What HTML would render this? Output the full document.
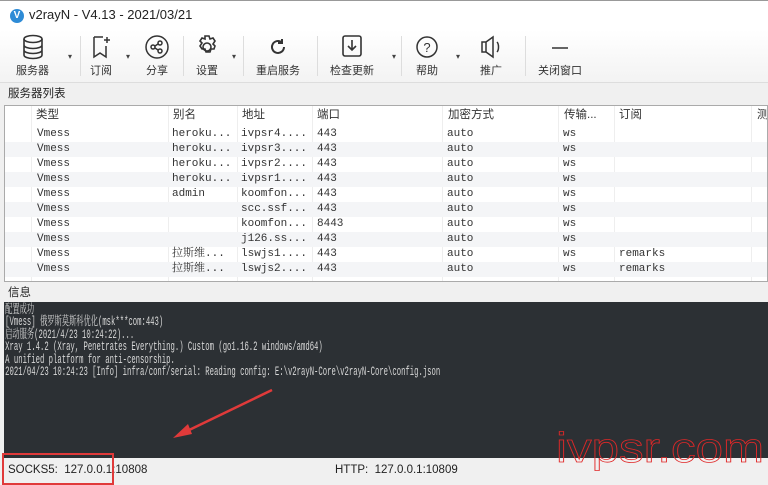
<!DOCTYPE html>
<html><head><meta charset="utf-8"><style>
*{margin:0;padding:0;box-sizing:border-box}
body{width:768px;height:485px;overflow:hidden;background:#f0f0f0;font-family:"Liberation Sans","Noto Sans CJK SC",sans-serif;position:relative;font-size:11px;color:#222}
.abs{position:absolute}
.title{left:0;top:0;width:768px;height:30px;background:#fff;border-top:1px solid #999}
.tb{top:30px;left:0;width:768px;height:52px;background:linear-gradient(#fff,#f3f3f3)}
.btn{position:absolute;top:4px;text-align:center;font-size:11px;color:#333}
.btn svg{display:block;margin:0 auto 2px}
.sep{position:absolute;top:6px;width:1px;height:40px;background:#ddd}
.dd{position:absolute;top:22px;font-size:8px;color:#444}
.tbl{left:4px;top:105px;width:764px;height:177px;background:#fff;border:1px solid #aaa;overflow:hidden}
.row{position:absolute;left:0;width:764px;height:15px;font-family:"Liberation Mono","Noto Serif CJK SC",monospace;font-size:11px;line-height:13px;color:#333}
.row span{position:absolute;top:1px;white-space:nowrap;line-height:13px}
.hd span{font-family:"Liberation Sans","Noto Sans CJK SC",sans-serif;font-size:11.5px;color:#333}
.alt{background:#f4f5f7}
.vl{position:absolute;top:0;width:1px;height:177px;background:#eee}
.con{left:4px;top:302px;width:764px;height:156px;background:#2c3034;overflow:hidden}
.con div{font-family:"Liberation Mono","Noto Serif CJK SC",monospace;font-size:12.5px;line-height:12.4px;color:#d8d8d8;padding:2px 0 0 2px;white-space:pre;transform:scaleX(0.58);transform-origin:0 0;width:1300px}
.status{left:0;top:458px;width:768px;height:27px;background:#f0f0f0;font-size:11.5px}
</style></head><body>
<div class="abs title">
 <div class="abs" style="left:10px;top:8px;width:14px;height:14px;border-radius:50%;background:#2e8bd6;color:#fff;font-size:10px;font-weight:bold;text-align:center;line-height:14px">V</div>
 <div class="abs" style="left:29px;top:6px;font-size:13px;color:#222">v2rayN - V4.13 - 2021/03/21</div>
</div>
<div class="abs tb">
 <div class="btn" style="left:16px"><svg width="24" height="26" viewBox="0 0 24 26" fill="none" stroke="#333" stroke-width="1.6"><ellipse cx="12" cy="5" rx="9" ry="3.5"/><path d="M3 5v16c0 2 4 3.5 9 3.5s9-1.5 9-3.5V5M3 11c0 2 4 3.5 9 3.5s9-1.5 9-3.5M3 16c0 2 4 3.5 9 3.5s9-1.5 9-3.5"/></svg>服务器</div>
 <div class="dd" style="left:68px">▾</div><div class="sep" style="left:80px"></div>
 <div class="btn" style="left:90px"><svg width="22" height="26" viewBox="0 0 22 26" fill="none" stroke="#333" stroke-width="1.5"><path d="M4 3h9M4 3v20l6-4 6 4V12M14 6h6M17 3v6"/></svg>订阅</div>
 <div class="dd" style="left:126px">▾</div>
 <div class="btn" style="left:145px"><svg width="24" height="26" viewBox="0 0 24 26" fill="none" stroke="#333" stroke-width="1.5"><circle cx="12" cy="13" r="11"/><circle cx="8" cy="13" r="2"/><circle cx="15" cy="9" r="2"/><circle cx="15" cy="17" r="2"/><path d="M10 12l3-2M10 14l3 2"/></svg>分享</div>
 <div class="sep" style="left:183px"></div>
 <div class="btn" style="left:195px"><svg width="24" height="26" viewBox="0 0 24 26" fill="none" stroke="#333" stroke-width="1.6"><circle cx="12" cy="13" r="4"/><path d="M10 2h4l1 3 3-1 2 3-2 3 2 2-1 3-3 0-1 3h-4l-1-3-3 0-2-3 2-3-2-2 2-3 3 1z"/></svg>设置</div>
 <div class="dd" style="left:232px">▾</div><div class="sep" style="left:243px"></div>
 <div class="btn" style="left:256px"><svg width="22" height="26" viewBox="0 0 22 26" fill="none" stroke="#333" stroke-width="2"><path d="M17 13a6 6 0 1 1-2-4.5M15 5v4h-4"/></svg>重启服务</div>
 <div class="sep" style="left:317px"></div>
 <div class="btn" style="left:330px"><svg width="24" height="26" viewBox="0 0 24 26" fill="none" stroke="#333" stroke-width="1.6"><rect x="3" y="2" width="18" height="20" rx="2"/><path d="M12 6v10M8 12l4 4 4-4"/></svg>检查更新</div>
 <div class="dd" style="left:392px">▾</div><div class="sep" style="left:401px"></div>
 <div class="btn" style="left:415px"><svg width="24" height="26" viewBox="0 0 24 26" fill="none" stroke="#333" stroke-width="1.5"><circle cx="12" cy="13" r="10"/><text x="12" y="18" font-size="13" text-anchor="middle" fill="#333" stroke="none" font-family="Liberation Sans">?</text></svg>帮助</div>
 <div class="dd" style="left:456px">▾</div>
 <div class="btn" style="left:479px"><svg width="24" height="26" viewBox="0 0 24 26" fill="none" stroke="#333" stroke-width="1.5"><path d="M3 8h4v10H3zM7 8l7-5v20l-7-5M18 8c2 2 2 8 0 10"/></svg>推广</div>
 <div class="sep" style="left:525px"></div>
 <div class="btn" style="left:538px"><svg width="24" height="26" viewBox="0 0 24 26"><path d="M4 14h16" stroke="#333" stroke-width="1.5"/></svg>关闭窗口</div>
</div>
<div class="abs" style="left:0;top:82px;width:768px;height:1px;background:#ddd"></div>
<div class="abs" style="left:8px;top:85px;font-size:11.5px">服务器列表</div>
<div class="abs tbl">
 <div class="vl" style="left:26px"></div><div class="vl" style="left:163px"></div><div class="vl" style="left:232px"></div><div class="vl" style="left:307px"></div><div class="vl" style="left:437px"></div><div class="vl" style="left:553px"></div><div class="vl" style="left:609px"></div><div class="vl" style="left:746px"></div>
 <div class="row hd" style="top:2px"><span style="left:31px">类型</span><span style="left:168px">别名</span><span style="left:237px">地址</span><span style="left:312px">端口</span><span style="left:443px">加密方式</span><span style="left:559px">传输...</span><span style="left:614px">订阅</span><span style="left:752px">测</span></div>
 <div class="row" style="top:21px"><span style="left:32px">Vmess</span><span style="left:167px">heroku...</span><span style="left:236px">ivpsr4....</span><span style="left:312px">443</span><span style="left:442px">auto</span><span style="left:558px">ws</span></div>
 <div class="row alt" style="top:36px"><span style="left:32px">Vmess</span><span style="left:167px">heroku...</span><span style="left:236px">ivpsr3....</span><span style="left:312px">443</span><span style="left:442px">auto</span><span style="left:558px">ws</span></div>
 <div class="row" style="top:51px"><span style="left:32px">Vmess</span><span style="left:167px">heroku...</span><span style="left:236px">ivpsr2....</span><span style="left:312px">443</span><span style="left:442px">auto</span><span style="left:558px">ws</span></div>
 <div class="row alt" style="top:66px"><span style="left:32px">Vmess</span><span style="left:167px">heroku...</span><span style="left:236px">ivpsr1....</span><span style="left:312px">443</span><span style="left:442px">auto</span><span style="left:558px">ws</span></div>
 <div class="row" style="top:81px"><span style="left:32px">Vmess</span><span style="left:167px">admin</span><span style="left:236px">koomfon...</span><span style="left:312px">443</span><span style="left:442px">auto</span><span style="left:558px">ws</span></div>
 <div class="row alt" style="top:96px"><span style="left:32px">Vmess</span><span style="left:236px">scc.ssf...</span><span style="left:312px">443</span><span style="left:442px">auto</span><span style="left:558px">ws</span></div>
 <div class="row" style="top:111px"><span style="left:32px">Vmess</span><span style="left:236px">koomfon...</span><span style="left:312px">8443</span><span style="left:442px">auto</span><span style="left:558px">ws</span></div>
 <div class="row alt" style="top:126px"><span style="left:32px">Vmess</span><span style="left:236px">j126.ss...</span><span style="left:312px">443</span><span style="left:442px">auto</span><span style="left:558px">ws</span></div>
 <div class="row" style="top:141px"><span style="left:32px">Vmess</span><span style="left:167px">拉斯维...</span><span style="left:236px">lswjs1....</span><span style="left:312px">443</span><span style="left:442px">auto</span><span style="left:558px">ws</span><span style="left:614px">remarks</span></div>
 <div class="row alt" style="top:156px"><span style="left:32px">Vmess</span><span style="left:167px">拉斯维...</span><span style="left:236px">lswjs2....</span><span style="left:312px">443</span><span style="left:442px">auto</span><span style="left:558px">ws</span><span style="left:614px">remarks</span></div>
</div>
<div class="abs" style="left:8px;top:284px;font-size:11.5px">信息</div>
<div class="abs con"><div>配置成功
[Vmess] 俄罗斯莫斯科优化(msk***com:443)
启动服务(2021/4/23 10:24:22)...
Xray 1.4.2 (Xray, Penetrates Everything.) Custom (go1.16.2 windows/amd64)
A unified platform for anti-censorship.
2021/04/23 10:24:23 [Info] infra/conf/serial: Reading config: E:\v2rayN-Core\v2rayN-Core\config.json</div></div>
<div class="abs status">
 <div class="abs" style="left:8px;top:6px">SOCKS5:&nbsp; 127.0.0.1:10808</div>
 <div class="abs" style="left:335px;top:6px">HTTP:&nbsp; 127.0.0.1:10809</div>
</div>
<svg class="abs" style="left:0;top:0" width="768" height="485">
 <path d="M272 390 L185 432" stroke="#e03a3a" stroke-width="2.5"/>
 <path d="M173 438 L188 424 L192 434 Z" fill="#e03a3a"/>
 <text x="556" y="462" font-family="Liberation Sans" font-size="42" textLength="208" lengthAdjust="spacingAndGlyphs" fill="none" stroke="#e02828" stroke-width="0.8">ivpsr.com</text>
</svg>
<div class="abs" style="left:2px;top:453px;width:112px;height:32px;border:2px solid #e03a3a"></div>
</body></html>
